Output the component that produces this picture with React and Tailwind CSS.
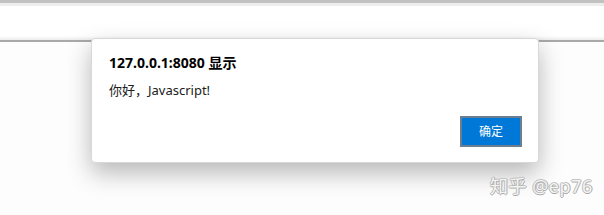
import React from 'react';

const font = { fontFamily: '"Noto Sans", "Noto Sans CJK SC", sans-serif' };

const App = () => {
    return (
        <div className="relative w-[604px] h-[215px] overflow-hidden bg-white" style={font}>
            {/* browser chrome */}
            <div className="h-[3px] bg-[#c2c2c2]"></div>
            <div className="h-[3px] bg-[#ededed]"></div>
            <div className="h-[30px] bg-white"></div>
            <div className="h-[4px] bg-gradient-to-b from-white to-[#ececec]"></div>
            <div className="h-[2px] bg-[#a9a9a9]"></div>
            <div className="h-[173px] bg-[#fdfdfd]"></div>

            {/* alert dialog */}
            <div className="absolute left-[91px] top-[38px] w-[448px] h-[125px] bg-white rounded-[4px] border border-[#d8d8d8] shadow-[0_10px_24px_rgba(0,0,0,0.28)] flex flex-col pl-[17px] pr-[16px] pt-[14px]">
                <div className="text-[14px] font-bold text-black leading-[20px]">127.0.0.1:8080 显示</div>
                <div className="text-[13px] text-[#202020] leading-[18px] mt-[8px]">你好，Javascript!</div>
                <div className="flex justify-end mt-[17px]">
                    <button className="w-[62px] h-[31px] bg-[#0078d7] border-2 border-[#6d7e90] text-white text-[12px] leading-none flex items-center justify-center">
                        确定
                    </button>
                </div>
            </div>

            {/* watermark */}
            <div className="absolute left-[490px] top-[173px] text-[18px] text-[#f4f4f4] tracking-[0.5px] [text-shadow:1px_0_0_#a8a8a8,-1px_0_0_#bcbcbc,0_1px_0_#a8a8a8,0_-1px_0_#c4c4c4]">
                知乎 @ep76
            </div>
        </div>
    );
};

export default App;
